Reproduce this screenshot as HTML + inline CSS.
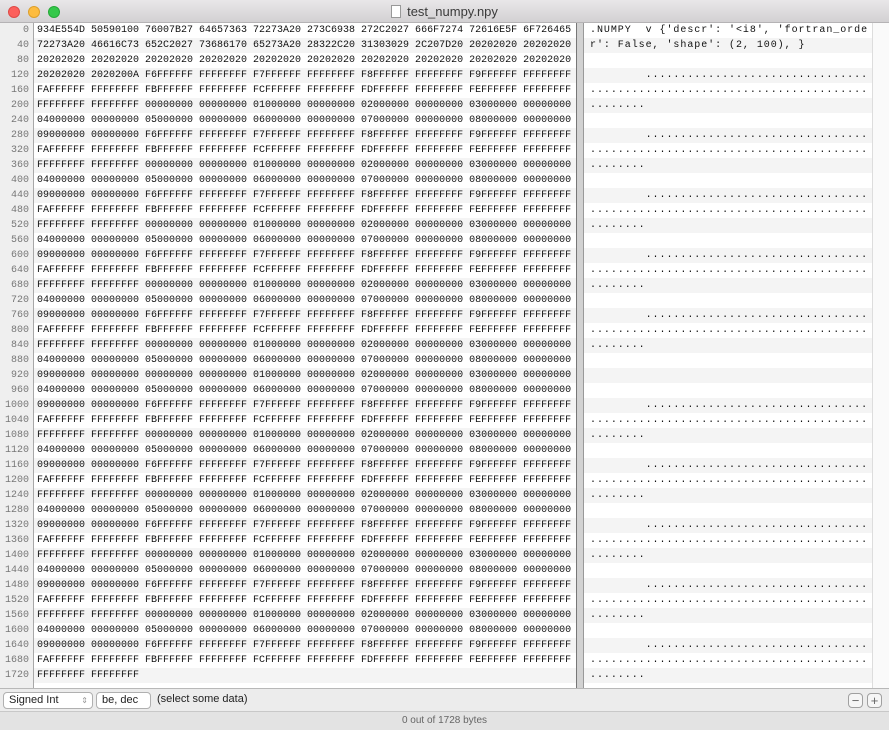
<!DOCTYPE html>
<html><head><meta charset="utf-8"><style>
*{margin:0;padding:0;box-sizing:border-box}
body{width:889px;height:730px;overflow:hidden;background:#ececec;font-family:"Liberation Sans",sans-serif;position:relative}
#title{position:absolute;left:0;top:0;width:889px;height:23px;background:linear-gradient(#e9e7e9,#d3d1d3);border-bottom:1px solid #b5b3b5}
.dot{position:absolute;top:6px;width:12px;height:12px;border-radius:50%}
#ttl{position:absolute;left:0;width:889px;top:4px;text-align:center;font-size:13px;color:#3a3a3a}
#gut{position:absolute;left:0;top:23px;width:34px;height:665px;background:#efefef;border-right:1px solid #a8a8a8}
#hex{position:absolute;left:34px;top:23px;width:542px;height:665px;background:#fff;overflow:hidden}
#txt{position:absolute;left:584px;top:23px;width:288px;height:665px;background:#fff;overflow:hidden}
#div{position:absolute;left:576px;top:23px;width:8px;height:665px;background:#d2d2d2;border-left:1px solid #777;border-right:1px solid #999}
#rsb{position:absolute;left:872px;top:23px;width:17px;height:665px;background:#fafafa;border-left:1px solid #ddd}
.r{height:15px;line-height:15px;font-family:"Liberation Mono",monospace;font-size:10px;white-space:pre;color:#111}
.r:nth-child(even){background:#f4f4f4}
#gut .r{background:none;text-align:right;padding-right:4px;color:#777}
#hex .r{padding-left:3px}
#txt .r{padding-left:6px;letter-spacing:0.95px}
#tb{position:absolute;left:0;top:688px;width:889px;height:24px;background:#ececec;border-top:1px solid #b8b8b8;border-bottom:1px solid #c8c8c8}
#st{position:absolute;left:0;top:712px;width:889px;height:18px;background:#e3e3e3;text-align:center;font-size:10px;color:#666;line-height:17px}
.btn{position:absolute;top:3px;height:17px;border:1px solid #b0b0b0;border-radius:4px;background:#fff;font-size:11px;line-height:15px;color:#222;padding-left:5px}
.sq{position:absolute;top:4px;width:15px;height:15px;border:1px solid #a0a0a0;border-radius:4px;background:#f6f6f6;text-align:center;line-height:13px;font-size:13px;color:#666}
</style></head><body>
<div id="title">
<div class="dot" style="left:8px;background:#fc605c;border:1px solid #de4a46"></div>
<div class="dot" style="left:28px;background:#fdbc40;border:1px solid #dd9f2c"></div>
<div class="dot" style="left:48px;background:#34c84a;border:1px solid #25a838"></div>
<div id="ttl"><span style="display:inline-block;width:10px;height:13px;border:1px solid #999;background:#fff;vertical-align:-2px;margin-right:6px"></span>test_numpy.npy</div>
</div>
<div id="gut">
<div class="r">0</div><div class="r">40</div><div class="r">80</div><div class="r">120</div><div class="r">160</div><div class="r">200</div><div class="r">240</div><div class="r">280</div><div class="r">320</div><div class="r">360</div><div class="r">400</div><div class="r">440</div><div class="r">480</div><div class="r">520</div><div class="r">560</div><div class="r">600</div><div class="r">640</div><div class="r">680</div><div class="r">720</div><div class="r">760</div><div class="r">800</div><div class="r">840</div><div class="r">880</div><div class="r">920</div><div class="r">960</div><div class="r">1000</div><div class="r">1040</div><div class="r">1080</div><div class="r">1120</div><div class="r">1160</div><div class="r">1200</div><div class="r">1240</div><div class="r">1280</div><div class="r">1320</div><div class="r">1360</div><div class="r">1400</div><div class="r">1440</div><div class="r">1480</div><div class="r">1520</div><div class="r">1560</div><div class="r">1600</div><div class="r">1640</div><div class="r">1680</div><div class="r">1720</div>
</div>
<div id="hex">
<div class="r">934E554D 50590100 76007B27 64657363 72273A20 273C6938 272C2027 666F7274 72616E5F 6F726465</div>
<div class="r">72273A20 46616C73 652C2027 73686170 65273A20 28322C20 31303029 2C207D20 20202020 20202020</div>
<div class="r">20202020 20202020 20202020 20202020 20202020 20202020 20202020 20202020 20202020 20202020</div>
<div class="r">20202020 2020200A F6FFFFFF FFFFFFFF F7FFFFFF FFFFFFFF F8FFFFFF FFFFFFFF F9FFFFFF FFFFFFFF</div>
<div class="r">FAFFFFFF FFFFFFFF FBFFFFFF FFFFFFFF FCFFFFFF FFFFFFFF FDFFFFFF FFFFFFFF FEFFFFFF FFFFFFFF</div>
<div class="r">FFFFFFFF FFFFFFFF 00000000 00000000 01000000 00000000 02000000 00000000 03000000 00000000</div>
<div class="r">04000000 00000000 05000000 00000000 06000000 00000000 07000000 00000000 08000000 00000000</div>
<div class="r">09000000 00000000 F6FFFFFF FFFFFFFF F7FFFFFF FFFFFFFF F8FFFFFF FFFFFFFF F9FFFFFF FFFFFFFF</div>
<div class="r">FAFFFFFF FFFFFFFF FBFFFFFF FFFFFFFF FCFFFFFF FFFFFFFF FDFFFFFF FFFFFFFF FEFFFFFF FFFFFFFF</div>
<div class="r">FFFFFFFF FFFFFFFF 00000000 00000000 01000000 00000000 02000000 00000000 03000000 00000000</div>
<div class="r">04000000 00000000 05000000 00000000 06000000 00000000 07000000 00000000 08000000 00000000</div>
<div class="r">09000000 00000000 F6FFFFFF FFFFFFFF F7FFFFFF FFFFFFFF F8FFFFFF FFFFFFFF F9FFFFFF FFFFFFFF</div>
<div class="r">FAFFFFFF FFFFFFFF FBFFFFFF FFFFFFFF FCFFFFFF FFFFFFFF FDFFFFFF FFFFFFFF FEFFFFFF FFFFFFFF</div>
<div class="r">FFFFFFFF FFFFFFFF 00000000 00000000 01000000 00000000 02000000 00000000 03000000 00000000</div>
<div class="r">04000000 00000000 05000000 00000000 06000000 00000000 07000000 00000000 08000000 00000000</div>
<div class="r">09000000 00000000 F6FFFFFF FFFFFFFF F7FFFFFF FFFFFFFF F8FFFFFF FFFFFFFF F9FFFFFF FFFFFFFF</div>
<div class="r">FAFFFFFF FFFFFFFF FBFFFFFF FFFFFFFF FCFFFFFF FFFFFFFF FDFFFFFF FFFFFFFF FEFFFFFF FFFFFFFF</div>
<div class="r">FFFFFFFF FFFFFFFF 00000000 00000000 01000000 00000000 02000000 00000000 03000000 00000000</div>
<div class="r">04000000 00000000 05000000 00000000 06000000 00000000 07000000 00000000 08000000 00000000</div>
<div class="r">09000000 00000000 F6FFFFFF FFFFFFFF F7FFFFFF FFFFFFFF F8FFFFFF FFFFFFFF F9FFFFFF FFFFFFFF</div>
<div class="r">FAFFFFFF FFFFFFFF FBFFFFFF FFFFFFFF FCFFFFFF FFFFFFFF FDFFFFFF FFFFFFFF FEFFFFFF FFFFFFFF</div>
<div class="r">FFFFFFFF FFFFFFFF 00000000 00000000 01000000 00000000 02000000 00000000 03000000 00000000</div>
<div class="r">04000000 00000000 05000000 00000000 06000000 00000000 07000000 00000000 08000000 00000000</div>
<div class="r">09000000 00000000 00000000 00000000 01000000 00000000 02000000 00000000 03000000 00000000</div>
<div class="r">04000000 00000000 05000000 00000000 06000000 00000000 07000000 00000000 08000000 00000000</div>
<div class="r">09000000 00000000 F6FFFFFF FFFFFFFF F7FFFFFF FFFFFFFF F8FFFFFF FFFFFFFF F9FFFFFF FFFFFFFF</div>
<div class="r">FAFFFFFF FFFFFFFF FBFFFFFF FFFFFFFF FCFFFFFF FFFFFFFF FDFFFFFF FFFFFFFF FEFFFFFF FFFFFFFF</div>
<div class="r">FFFFFFFF FFFFFFFF 00000000 00000000 01000000 00000000 02000000 00000000 03000000 00000000</div>
<div class="r">04000000 00000000 05000000 00000000 06000000 00000000 07000000 00000000 08000000 00000000</div>
<div class="r">09000000 00000000 F6FFFFFF FFFFFFFF F7FFFFFF FFFFFFFF F8FFFFFF FFFFFFFF F9FFFFFF FFFFFFFF</div>
<div class="r">FAFFFFFF FFFFFFFF FBFFFFFF FFFFFFFF FCFFFFFF FFFFFFFF FDFFFFFF FFFFFFFF FEFFFFFF FFFFFFFF</div>
<div class="r">FFFFFFFF FFFFFFFF 00000000 00000000 01000000 00000000 02000000 00000000 03000000 00000000</div>
<div class="r">04000000 00000000 05000000 00000000 06000000 00000000 07000000 00000000 08000000 00000000</div>
<div class="r">09000000 00000000 F6FFFFFF FFFFFFFF F7FFFFFF FFFFFFFF F8FFFFFF FFFFFFFF F9FFFFFF FFFFFFFF</div>
<div class="r">FAFFFFFF FFFFFFFF FBFFFFFF FFFFFFFF FCFFFFFF FFFFFFFF FDFFFFFF FFFFFFFF FEFFFFFF FFFFFFFF</div>
<div class="r">FFFFFFFF FFFFFFFF 00000000 00000000 01000000 00000000 02000000 00000000 03000000 00000000</div>
<div class="r">04000000 00000000 05000000 00000000 06000000 00000000 07000000 00000000 08000000 00000000</div>
<div class="r">09000000 00000000 F6FFFFFF FFFFFFFF F7FFFFFF FFFFFFFF F8FFFFFF FFFFFFFF F9FFFFFF FFFFFFFF</div>
<div class="r">FAFFFFFF FFFFFFFF FBFFFFFF FFFFFFFF FCFFFFFF FFFFFFFF FDFFFFFF FFFFFFFF FEFFFFFF FFFFFFFF</div>
<div class="r">FFFFFFFF FFFFFFFF 00000000 00000000 01000000 00000000 02000000 00000000 03000000 00000000</div>
<div class="r">04000000 00000000 05000000 00000000 06000000 00000000 07000000 00000000 08000000 00000000</div>
<div class="r">09000000 00000000 F6FFFFFF FFFFFFFF F7FFFFFF FFFFFFFF F8FFFFFF FFFFFFFF F9FFFFFF FFFFFFFF</div>
<div class="r">FAFFFFFF FFFFFFFF FBFFFFFF FFFFFFFF FCFFFFFF FFFFFFFF FDFFFFFF FFFFFFFF FEFFFFFF FFFFFFFF</div>
<div class="r">FFFFFFFF FFFFFFFF</div>
</div>
<div id="div"></div>
<div id="txt">
<div class="r">.NUMPY  v {'descr': '&lt;i8', 'fortran_orde</div>
<div class="r">r': False, 'shape': (2, 100), }</div>
<div class="r"> </div>
<div class="r">        ................................</div>
<div class="r">........................................</div>
<div class="r">........</div>
<div class="r"> </div>
<div class="r">        ................................</div>
<div class="r">........................................</div>
<div class="r">........</div>
<div class="r"> </div>
<div class="r">        ................................</div>
<div class="r">........................................</div>
<div class="r">........</div>
<div class="r"> </div>
<div class="r">        ................................</div>
<div class="r">........................................</div>
<div class="r">........</div>
<div class="r"> </div>
<div class="r">        ................................</div>
<div class="r">........................................</div>
<div class="r">........</div>
<div class="r"> </div>
<div class="r"> </div>
<div class="r"> </div>
<div class="r">        ................................</div>
<div class="r">........................................</div>
<div class="r">........</div>
<div class="r"> </div>
<div class="r">        ................................</div>
<div class="r">........................................</div>
<div class="r">........</div>
<div class="r"> </div>
<div class="r">        ................................</div>
<div class="r">........................................</div>
<div class="r">........</div>
<div class="r"> </div>
<div class="r">        ................................</div>
<div class="r">........................................</div>
<div class="r">........</div>
<div class="r"> </div>
<div class="r">        ................................</div>
<div class="r">........................................</div>
<div class="r">........</div>
</div>
<div id="rsb"></div>
<div id="tb">
<div class="btn" style="left:3px;width:90px">Signed Int<span style="position:absolute;right:4px;top:0;font-size:8px;color:#999">&#8661;</span></div>
<div class="btn" style="left:96px;width:55px">be, dec</div>
<div style="position:absolute;left:157px;top:4px;font-size:11px;color:#222">(select some data)</div>
<div class="sq" style="left:848px">&minus;</div>
<div class="sq" style="left:867px">+</div>
</div>
<div id="st">0 out of 1728 bytes</div>
</body></html>
